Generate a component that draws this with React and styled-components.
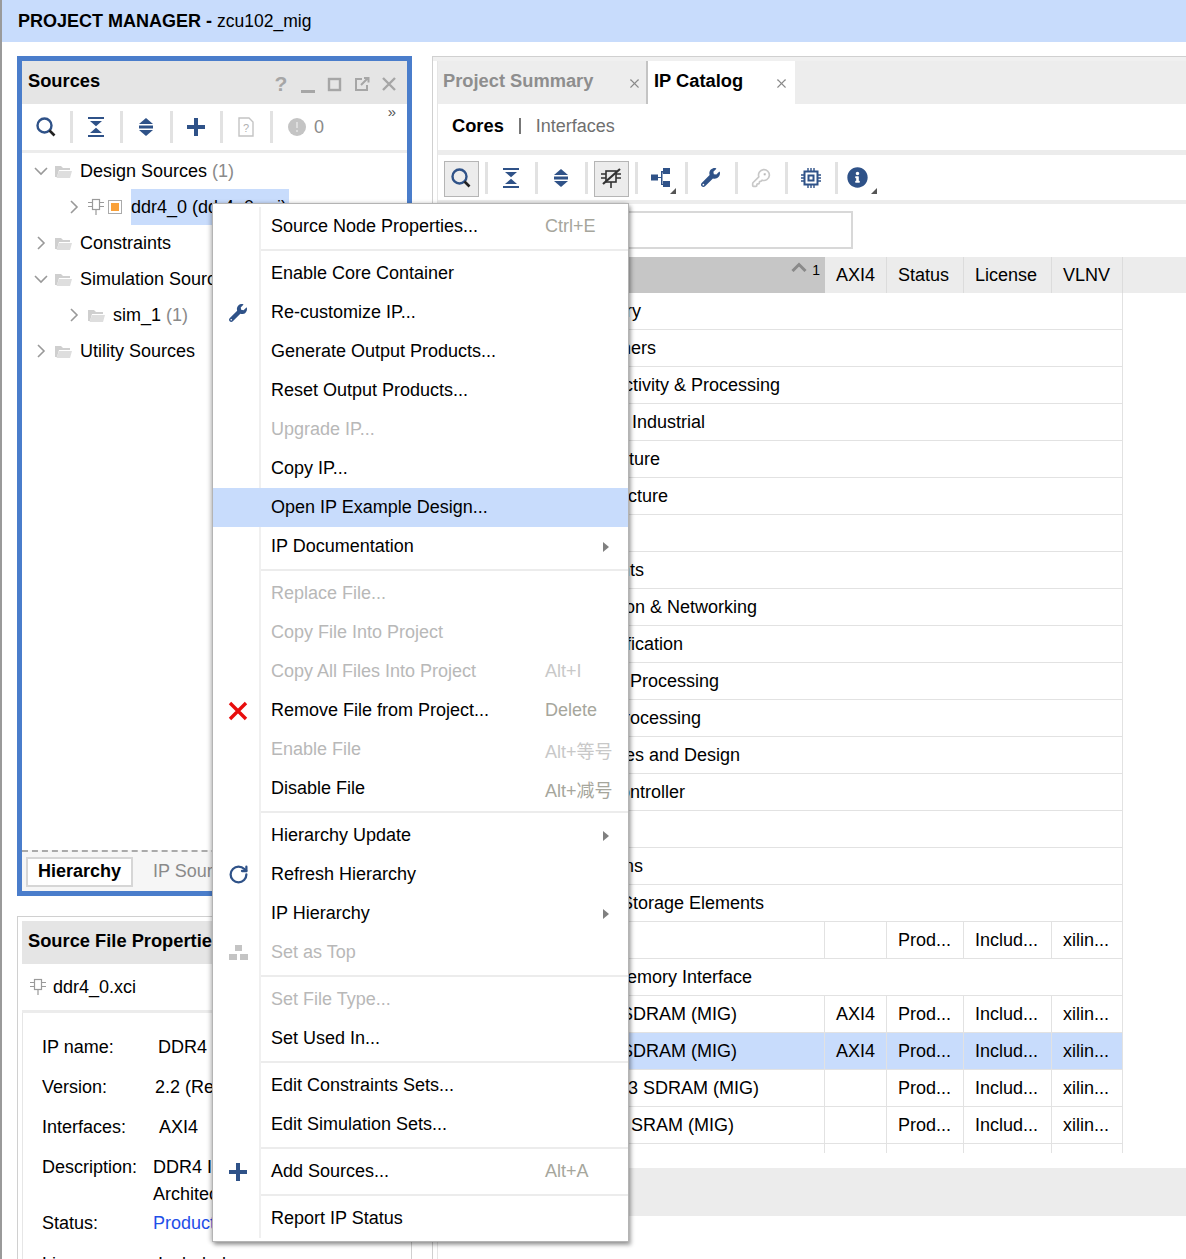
import React from 'react';
import styled, { createGlobalStyle } from 'styled-components';
import { FaWrench, FaInfoCircle } from 'react-icons/fa';
import { RotateCw, KeyRound, X as XIcon } from 'lucide-react';

const NAVY = '#2f5288';
const FONT = '"Liberation Sans", Arial, "Noto Sans CJK SC", sans-serif';

const GlobalStyle = createGlobalStyle`
    html, body {
        margin: 0;
        padding: 0;
        background: #fff;
    }
    body {
        width: 1186px;
        height: 1259px;
        overflow: hidden;
        font-family: ${FONT};
        font-size: 18px;
        color: #000;
    }
    * {
        box-sizing: border-box;
    }
`;

const Page = styled.div`
    position: relative;
    width: 1186px;
    height: 1259px;
    overflow: hidden;
    border-left: 2px solid #9a9a9a;
`;
const TopBar = styled.header`
    height: 42px;
    margin-left: -2px;
    padding-left: 18px;
    display: flex;
    align-items: center;
    background: #c8dcfc;
    font-size: 17.5px;
    b {
        margin-right: 5px;
        font-size: 18px;
    }
`;
const Columns = styled.div`
    display: flex;
    gap: 20px;
    padding: 14px 0 0 15px;
`;
const LeftCol = styled.div`
    width: 395px;
    flex: none;
    display: flex;
    flex-direction: column;
    gap: 20px;
`;

/* sources panel */
const SourcesPanel = styled.section`
    height: 840px;
    border: 5px solid #4a7dcb;
    display: flex;
    flex-direction: column;
`;
const TitleBar = styled.div`
    height: 43px;
    flex: none;
    padding: 0 3px 4px 6px;
    display: flex;
    align-items: center;
    justify-content: space-between;
    background: #e5e5e5;
    font-weight: bold;
    font-size: 18.3px;
`;
const TitleIcons = styled.div`
    display: flex;
    gap: 7px;
    padding: 8px 5px 0 0;
    svg {
        display: block;
        overflow: visible;
    }
`;
const Toolbar = styled.div`
    position: relative;
    height: ${(p) => p.$h}px;
    flex: none;
    padding-left: ${(p) => p.$pad}px;
    display: flex;
    align-items: center;
    background: #fff;
    border-bottom: ${(p) => p.$line}px solid #ececec;
`;
const Tool = styled.div`
    position: relative;
    width: 50px;
    height: 32px;
    flex: none;
    display: flex;
    align-items: center;
    justify-content: center;
    padding-right: 2px;
    border-right: 3px solid #e2e2e2;
    ${(p) => p.$plain && 'border-right: none;'}
    & > svg {
        display: block;
    }
    &::before {
        content: '';
        display: ${(p) => (p.$pressed ? 'block' : 'none')};
        position: absolute;
        left: 6px;
        top: -1px;
        width: 33px;
        height: 34px;
        background: #ececec;
        border: 1px solid #b5b5b5;
    }
    & > * {
        position: relative;
    }
`;
const Corner = styled.i`
    position: absolute !important;
    right: 9px;
    bottom: 0;
    width: 0;
    height: 0;
    border-left: 6px solid transparent;
    border-bottom: 6px solid #555;
`;
const Count = styled.span`
    color: #8a8a8a;
    margin-left: 8px;
`;
const More = styled.span`
    position: absolute;
    right: 11px;
    top: -1px;
    font-size: 15px;
    color: #555;
`;
const Tree = styled.div`
    flex: 1;
    overflow: hidden;
`;
const TreeRow = styled.div`
    height: 36px;
    padding-left: ${(p) => p.$indent}px;
    display: flex;
    align-items: center;
    white-space: nowrap;
    svg {
        flex: none;
    }
`;
const Twist = styled.svg`
    width: 14px;
    height: 14px;
    margin-right: 7px;
`;
const FolderSlot = styled.span`
    display: flex;
    margin-right: 8px;
`;
const Selected = styled.span`
    background: #c8dcfc;
    height: 36px;
    line-height: 36px;
    width: 158px;
    overflow: hidden;
    margin-left: 9px;
`;
const Muted = styled.span`
    color: #8a8a8a;
`;
const BottomTabs = styled.div`
    height: 41px;
    flex: none;
    padding-left: 4px;
    display: flex;
    align-items: center;
    gap: 18px;
    background: #f6f6f6;
    border-top: 2px dashed #aaa;
`;
const BottomTab = styled.div`
    height: 30px;
    padding: 0 10px;
    display: flex;
    align-items: center;
    white-space: nowrap;
    font-weight: ${(p) => (p.$active ? 'bold' : 'normal')};
    color: ${(p) => (p.$active ? '#000' : '#8a8a8a')};
    background: ${(p) => (p.$active ? '#fff' : 'transparent')};
    border: 2px solid ${(p) => (p.$active ? '#d6d6d6' : 'transparent')};
    ${(p) => !p.$active && 'padding-left: 0;'}
`;

/* properties panel */
const PropsPanel = styled.section`
    height: 360px;
    padding: 4px 0 0 4px;
    border: 1px solid #d0d0d0;
    border-bottom: none;
`;
const FileRow = styled.div`
    height: 49px;
    padding-left: 8px;
    display: flex;
    align-items: center;
    gap: 7px;
    border-bottom: 3px solid #ececec;
`;
const PropsBody = styled.div`
    padding: 21px 0 0 19px;
    border-left: 1px solid #e6e6e6;
    height: 260px;
`;
const PropRow = styled.div`
    display: flex;
    line-height: 27px;
    margin-bottom: ${(p) => p.$after}px;
    white-space: nowrap;
`;
const PropName = styled.div`
    width: 111px;
    flex: none;
`;
const PropValue = styled.div`
    margin-left: ${(p) => p.$shift || 0}px;
    color: ${(p) => (p.$link ? '#1f4fe8' : '#000')};
`;

/* ip catalog panel */
const CatalogPanel = styled.section`
    flex: 1;
    min-width: 0;
    height: 1203px;
    margin-right: -2px;
    padding: 4px 0 0 4px;
    background: linear-gradient(#f0f0f0 4px, #fff 4px);
    border-left: 1px solid #d0d0d0;
    border-top: 1px solid #d0d0d0;
`;
const Inner = styled.div`
    height: 100%;
    border-left: 1px solid #e6e6e6;
    margin-left: 0;
`;
const TabBar = styled.div`
    height: 43px;
    display: flex;
    background: #ededed;
`;
const Tab = styled.div`
    width: ${(p) => p.$w}px;
    padding: 0 ${(p) => p.$right}px 4px ${(p) => (p.$active ? 6 : 5)}px;
    display: flex;
    align-items: center;
    justify-content: space-between;
    font-weight: bold;
    font-size: 18.3px;
    color: ${(p) => (p.$active ? '#000' : '#8e8e8e')};
    background: ${(p) => (p.$active ? '#fff' : '#ededed')};
    border-left: ${(p) => (p.$active ? '2px solid #c4c4c4' : 'none')};
    svg {
        margin-top: 6px;
        color: #8a8a8a;
    }
`;
const SubTabs = styled.div`
    height: 51px;
    padding: 0 0 3px 14px;
    display: flex;
    align-items: center;
    border-bottom: 5px solid #ececec;
    b {
        font-size: 18.3px;
    }
`;
const SubDivider = styled.span`
    width: 2px;
    height: 16px;
    margin: 0 15px;
    background: #777;
`;
const SubLink = styled.span`
    padding-top: 2px;
    color: #6f6f6f;
`;
const SearchWrap = styled.div`
    height: 53px;
    padding: 7px 0 0 6px;
`;
const SearchBox = styled.div`
    width: 409px;
    height: 38px;
    border: 2px solid #d8d8d8;
    background: #fff;
`;
const Header = styled.div`
    height: 36px;
    display: flex;
    background: #ececec;
`;
const HeadCell = styled.div`
    width: ${(p) => p.$w}px;
    flex: none;
    padding-left: 11px;
    display: flex;
    align-items: center;
    border-right: 1px solid #dcdcdc;
`;
const SortCell = styled.div`
    width: 387px;
    flex: none;
    padding-right: 5px;
    display: flex;
    align-items: flex-start;
    justify-content: flex-end;
    gap: 3px;
    background: #c6c6c6;
    font-size: 14px;
    line-height: 26px;
    svg {
        margin: 5px 2px 0 0;
    }
`;
const Body = styled.div`
    width: 685px;
    height: 860px;
    overflow: hidden;
    border-right: 1px solid #e2e2e2;
`;
const Row = styled.div`
    height: 37px;
    display: flex;
    background: ${(p) => (p.$selected ? '#c8dcfc' : '#fff')};
    border-bottom: 1px solid #e2e2e2;
`;
const NameCell = styled.div`
    flex: ${(p) => (p.$wide ? '1' : 'none')};
    width: ${(p) => (p.$wide ? 'auto' : '387px')};
    padding-left: ${(p) => p.$indent}px;
    display: flex;
    align-items: center;
    white-space: nowrap;
    border-right: ${(p) => (p.$wide ? 'none' : '1px solid #e2e2e2')};
`;
const Cell = styled.div`
    width: ${(p) => p.$w}px;
    flex: none;
    padding-left: 11px;
    display: flex;
    align-items: center;
    white-space: nowrap;
    border-right: 1px solid #e2e2e2;
    &:last-child {
        border-right: none;
    }
`;
const FooterBand = styled.div`
    height: 48px;
    margin-top: 15px;
    background: #ececec;
`;

/* context menu */
const Menu = styled.div`
    position: absolute;
    left: 210px;
    top: 203px;
    width: 417px;
    height: 1039px;
    padding-top: 3px;
    background: #fff;
    border: 1px solid #b4b4b4;
    box-shadow: 2px 3px 4px rgba(0, 0, 0, 0.35), -2px 0 4px rgba(0, 0, 0, 0.2);
`;
const Item = styled.div`
    height: 39px;
    display: flex;
    align-items: center;
    white-space: nowrap;
    background: ${(p) => (p.$active ? '#c8dcfc' : 'transparent')};
    color: ${(p) => (p.$disabled ? '#b8b8b8' : '#000')};
`;
const ItemIcon = styled.div`
    width: 48px;
    height: 100%;
    flex: none;
    padding-left: 4px;
    display: flex;
    align-items: center;
    justify-content: center;
    border-right: 2px solid ${(p) => (p.$active ? 'transparent' : '#f0f0f0')};
`;
const ItemLabel = styled.div`
    width: 284px;
    flex: none;
    padding-left: 10px;
`;
const Shortcut = styled.div`
    color: ${(p) => (p.$disabled ? '#c8c8c8' : '#a6a69c')};
`;
const Arrow = styled.i`
    margin-left: 58px;
    width: 0;
    height: 0;
    border-left: 6px solid #808080;
    border-top: 5px solid transparent;
    border-bottom: 5px solid transparent;
`;
const Separator = styled.div`
    height: 8px;
    margin-left: 46px;
    padding-top: 3px;
    border-left: 2px solid #f0f0f0;
    &::after {
        content: '';
        display: block;
        height: 2px;
        background: #ececec;
    }
`;

/* icons */
const SearchIcon = () => (
    <svg width="22" height="22" viewBox="0 0 22 22" fill="none">
        <circle cx="9.5" cy="9.5" r="7" stroke={NAVY} strokeWidth="2.4" />
        <path d="M14.5 14.5l5 5" stroke="#222" strokeWidth="2.6" />
    </svg>
);
const CollapseIcon = () => (
    <svg width="16" height="22" viewBox="0 0 16 22" fill={NAVY}>
        <rect x="0" y="1" width="16" height="2" />
        <path d="M2 5h12L8 10.200z" />
        <path d="M2 17h12L8 11.800z" />
        <rect x="0" y="19" width="16" height="2" />
    </svg>
);
const ExpandIcon = () => (
    <svg width="16" height="20" viewBox="0 0 16 20" fill={NAVY}>
        <path d="M8 1l7 6H1z" />
        <rect x="1" y="8.5" width="14" height="3" />
        <path d="M8 19l7-6H1z" />
    </svg>
);
const PlusIcon = ({ size = 20 }) => (
    <svg width={size} height={size} viewBox="0 0 20 20" fill={NAVY}>
        <path d="M8 1h4v7h7v4h-7v7H8v-7H1V8h7z" />
    </svg>
);
const DocIcon = () => (
    <svg width="16" height="20" viewBox="0 0 16 20" fill="none" stroke="#c4c4c4" strokeWidth="1.4">
        <path d="M1 1h10l4 4v14H1z" />
        <text x="8" y="15" fontSize="11" fontFamily={FONT} fill="#b0b0b0" stroke="none" textAnchor="middle">?</text>
    </svg>
);
const AlertIcon = () => (
    <svg width="18" height="18" viewBox="0 0 18 18">
        <circle cx="9" cy="9" r="9" fill="#c4c4c4" />
        <path d="M8 4h2v6H8zM8 12h2v2H8z" fill="#ddd" />
    </svg>
);
const FolderIcon = () => (
    <svg width="17" height="15" viewBox="0 0 17 15">
        <path d="M0 2h6l2 2h7v2H4L2 13H0z" fill="#cfcfcf" />
        <path d="M4 7h13l-2 7H1.500z" fill="#dedede" />
    </svg>
);
const IpIcon = () => (
    <svg width="16" height="18" viewBox="0 0 16 18" fill="none" stroke="#9a9a9a" strokeWidth="1.2">
        <rect x="4.500" y="1.500" width="7" height="10" />
        <path d="M0 4.500h4.500M0 8.500h4.500M11.500 4.500H16M11.500 8.500H16M8 11.500V17" />
    </svg>
);
const OrangeBox = () => (
    <svg width="14" height="14" viewBox="0 0 14 14" style={{ marginLeft: 4 }}>
        <rect x="0.500" y="0.500" width="13" height="13" fill="#fff" stroke="#aaa" />
        <rect x="3" y="3" width="8" height="8" fill="#f9a13a" />
    </svg>
);
const Chevron = ({ open }) => (
    <Twist viewBox="0 0 14 14" fill="none" stroke="#999" strokeWidth="1.6">
        <path d={open ? 'M1 4l6 6 6-6' : 'M4 1l6 6-6 6'} />
    </Twist>
);
const SchematicIcon = () => (
    <svg width="22" height="22" viewBox="0 0 22 22" fill="none" stroke="#333" strokeWidth="1.6">
        <rect x="6" y="4" width="10" height="11" />
        <path d="M1 7h5M1 11h5M16 7h5M16 11h5M11 15v6" />
        <path d="M3 17L20 2" strokeWidth="2.200" />
    </svg>
);
const HierIcon = () => (
    <svg width="20" height="19" viewBox="0 0 20 19" fill={NAVY}>
        <rect x="0" y="6.500" width="7" height="6" />
        <rect x="12" y="0" width="7" height="6" />
        <rect x="12" y="13" width="7" height="6" />
        <path d="M7 9h3V3h2v1.500h-.5V9.500h0V16h.5v1h-2v-7H7z" />
    </svg>
);
const ChipIcon = () => (
    <svg width="20" height="20" viewBox="0 0 20 20" fill="none" stroke={NAVY}>
        <rect x="3.500" y="3.500" width="13" height="13" strokeWidth="2" />
        <rect x="7.500" y="7.500" width="5" height="5" strokeWidth="2" />
        <path d="M7 0v3M10 0v3M13 0v3M7 17v3M10 17v3M13 17v3M0 7h3M0 10h3M0 13h3M17 7h3M17 10h3M17 13h3" strokeWidth="1.400" />
    </svg>
);
const RedX = () => (
    <svg width="20" height="20" viewBox="0 0 20 20" stroke="#e80d0d" strokeWidth="3.400">
        <path d="M2 2l16 16M18 2L2 18" />
    </svg>
);
const TopIcon = () => (
    <svg width="19" height="16" viewBox="0 0 19 16" fill="#c4c4c4">
        <rect x="6" y="0" width="7" height="6" />
        <rect x="0" y="9" width="8" height="6" />
        <rect x="11" y="9" width="8" height="6" />
    </svg>
);
const TitleGlyphs = () => (
    <TitleIcons>
        <svg width="20" height="20" viewBox="0 0 20 20">
            <text x="10" y="16" fontSize="21" fontWeight="bold" fontFamily={FONT} fill="#a6a6a6" textAnchor="middle">?</text>
        </svg>
        <svg width="20" height="20" viewBox="0 0 20 20" fill="#a6a6a6">
            <rect x="3" y="15" width="14" height="3" />
        </svg>
        <svg width="20" height="20" viewBox="0 0 20 20" fill="none" stroke="#a6a6a6" strokeWidth="2.400">
            <rect x="4" y="4" width="11" height="11" />
        </svg>
        <svg width="20" height="20" viewBox="0 0 20 20" fill="none" stroke="#a6a6a6" strokeWidth="2">
            <path d="M10 4H4v11h11V10M9 10l7-7M12 3h4.500v4.500" />
        </svg>
        <svg width="20" height="20" viewBox="0 0 20 20" fill="none" stroke="#a6a6a6" strokeWidth="2.400">
            <path d="M4 3l12 12M16 3L4 15" />
        </svg>
    </TitleIcons>
);

const CELLS = ['Prod...', 'Includ...', 'xilin...'];
const rows = [
    { name: 'AI Core Library', indent: 82 },
    { name: 'Alliance Partners', indent: 82 },
    { name: 'Audio Connectivity & Processing', indent: 82 },
    { name: 'Automotive & Industrial', indent: 82 },
    { name: 'AXI Infrastructure', indent: 82 },
    { name: 'Board Architecture', indent: 82 },
    { name: 'Base IP', indent: 82 },
    { name: 'Basic Elements', indent: 82 },
    { name: 'Communication & Networking', indent: 82 },
    { name: 'Debug & Verification', indent: 82 },
    { name: 'Digital Signal Processing', indent: 82 },
    { name: 'Embedded Processing', indent: 82 },
    { name: 'FPGA Features and Design', indent: 82 },
    { name: 'Peripheral Controller', indent: 82 },
    { name: 'Kernels', indent: 82 },
    { name: 'Math Functions', indent: 82 },
    { name: 'Memories & Storage Elements', indent: 82 },
    { name: 'FIFO', indent: 129, data: true },
    { name: 'External Memory Interface', indent: 103 },
    { name: 'DDR3 SDRAM (MIG)', indent: 129, data: true, axi: 'AXI4' },
    { name: 'DDR4 SDRAM (MIG)', indent: 129, data: true, axi: 'AXI4', selected: true },
    { name: 'LPDDR3 SDRAM (MIG)', indent: 129, data: true },
    { name: 'QDR-IV SRAM (MIG)', indent: 125, data: true },
    { name: '', indent: 129, data: true, blank: true },
];

const menu = [
    { label: 'Source Node Properties...', key: 'Ctrl+E' },
    'sep',
    { label: 'Enable Core Container' },
    { label: 'Re-customize IP...', icon: <FaWrench size={18} color={NAVY} /> },
    { label: 'Generate Output Products...' },
    { label: 'Reset Output Products...' },
    { label: 'Upgrade IP...', off: true },
    { label: 'Copy IP...' },
    { label: 'Open IP Example Design...', active: true },
    { label: 'IP Documentation', sub: true },
    'sep',
    { label: 'Replace File...', off: true },
    { label: 'Copy File Into Project', off: true },
    { label: 'Copy All Files Into Project', off: true, key: 'Alt+I' },
    { label: 'Remove File from Project...', icon: <RedX />, key: 'Delete' },
    { label: 'Enable File', off: true, key: 'Alt+等号' },
    { label: 'Disable File', key: 'Alt+减号' },
    'sep',
    { label: 'Hierarchy Update', sub: true },
    { label: 'Refresh Hierarchy', icon: <RotateCw size={21} color={NAVY} strokeWidth={2.6} /> },
    { label: 'IP Hierarchy', sub: true },
    { label: 'Set as Top', off: true, icon: <TopIcon /> },
    'sep',
    { label: 'Set File Type...', off: true },
    { label: 'Set Used In...' },
    'sep',
    { label: 'Edit Constraints Sets...' },
    { label: 'Edit Simulation Sets...' },
    'sep',
    { label: 'Add Sources...', icon: <PlusIcon />, key: 'Alt+A' },
    'sep',
    { label: 'Report IP Status' },
];

const App = () => {
    return (
        <Page>
            <GlobalStyle />
            <TopBar>
                <b>PROJECT MANAGER -</b> zcu102_mig
            </TopBar>
            <Columns>
                <LeftCol>
                    <SourcesPanel>
                        <TitleBar>
                            Sources
                            <TitleGlyphs />
                        </TitleBar>
                        <Toolbar $h={49} $pad={1} $line={3}>
                            <Tool><SearchIcon /></Tool>
                            <Tool><CollapseIcon /></Tool>
                            <Tool><ExpandIcon /></Tool>
                            <Tool><PlusIcon /></Tool>
                            <Tool><DocIcon /></Tool>
                            <Tool $plain style={{ width: 'auto', paddingLeft: 15 }}>
                                <AlertIcon />
                                <Count>0</Count>
                            </Tool>
                            <More>»</More>
                        </Toolbar>
                        <Tree>
                            <TreeRow $indent={12}>
                                <Chevron open />
                                <FolderSlot><FolderIcon /></FolderSlot>
                                Design Sources&nbsp;<Muted>(1)</Muted>
                            </TreeRow>
                            <TreeRow $indent={45}>
                                <Chevron />
                                <IpIcon />
                                <OrangeBox />
                                <Selected>ddr4_0 (ddr4_0.xci)</Selected>
                            </TreeRow>
                            <TreeRow $indent={12}>
                                <Chevron />
                                <FolderSlot><FolderIcon /></FolderSlot>
                                Constraints
                            </TreeRow>
                            <TreeRow $indent={12}>
                                <Chevron open />
                                <FolderSlot><FolderIcon /></FolderSlot>
                                Simulation Sources&nbsp;<Muted>(1)</Muted>
                            </TreeRow>
                            <TreeRow $indent={45}>
                                <Chevron />
                                <FolderSlot><FolderIcon /></FolderSlot>
                                sim_1&nbsp;<Muted>(1)</Muted>
                            </TreeRow>
                            <TreeRow $indent={12}>
                                <Chevron />
                                <FolderSlot><FolderIcon /></FolderSlot>
                                Utility Sources
                            </TreeRow>
                        </Tree>
                        <BottomTabs>
                            <BottomTab $active>Hierarchy</BottomTab>
                            <BottomTab>IP Sources</BottomTab>
                        </BottomTabs>
                    </SourcesPanel>
                    <PropsPanel>
                        <TitleBar>Source File Properties</TitleBar>
                        <FileRow>
                            <IpIcon />
                            ddr4_0.xci
                        </FileRow>
                        <PropsBody>
                            <PropRow $after={13}>
                                <PropName>IP name:</PropName>
                                <PropValue $shift={5}>DDR4 SDRAM (MIG)</PropValue>
                            </PropRow>
                            <PropRow $after={13}>
                                <PropName>Version:</PropName>
                                <PropValue $shift={2}>2.2 (Rev. 6)</PropValue>
                            </PropRow>
                            <PropRow $after={13}>
                                <PropName>Interfaces:</PropName>
                                <PropValue $shift={6}>AXI4</PropValue>
                            </PropRow>
                            <PropRow $after={2}>
                                <PropName>Description:</PropName>
                                <PropValue>
                                    DDR4 Interface for UltraScale
                                    <br />
                                    Architecture
                                </PropValue>
                            </PropRow>
                            <PropRow $after={14}>
                                <PropName>Status:</PropName>
                                <PropValue $link>Production</PropValue>
                            </PropRow>
                            <PropRow $after={0}>
                                <PropName>License:</PropName>
                                <PropValue $shift={5}>Included</PropValue>
                            </PropRow>
                        </PropsBody>
                    </PropsPanel>
                </LeftCol>
                <CatalogPanel>
                    <Inner>
                        <TabBar>
                            <Tab $w={208} $right={4}>
                                <span>Project Summary</span>
                                <XIcon size={15} strokeWidth={1.8} />
                            </Tab>
                            <Tab $w={149} $right={6} $active>
                                <span>IP Catalog</span>
                                <XIcon size={15} strokeWidth={1.8} />
                            </Tab>
                        </TabBar>
                        <SubTabs>
                            <b>Cores</b>
                            <SubDivider />
                            <SubLink>Interfaces</SubLink>
                        </SubTabs>
                        <Toolbar $h={49} $pad={0} $line={4}>
                            <Tool $pressed><SearchIcon /></Tool>
                            <Tool><CollapseIcon /></Tool>
                            <Tool><ExpandIcon /></Tool>
                            <Tool $pressed><SchematicIcon /></Tool>
                            <Tool><HierIcon /><Corner /></Tool>
                            <Tool><FaWrench size={19} color={NAVY} /></Tool>
                            <Tool><KeyRound size={20} color="#c8c8c8" /></Tool>
                            <Tool><ChipIcon /></Tool>
                            <Tool $plain style={{ width: 42, paddingRight: 4 }}><FaInfoCircle size={21} color={NAVY} /><Corner style={{ right: 3 }} /></Tool>
                        </Toolbar>
                        <SearchWrap>
                            <SearchBox />
                        </SearchWrap>
                        <Header>
                            <SortCell>
                                <svg width="16" height="10" viewBox="0 0 16 10" fill="none" stroke="#8a8a8a" strokeWidth="3">
                                    <path d="M1.500 9L8 2.500 14.500 9" />
                                </svg>
                                1
                            </SortCell>
                            <HeadCell $w={62}>AXI4</HeadCell>
                            <HeadCell $w={77}>Status</HeadCell>
                            <HeadCell $w={88}>License</HeadCell>
                            <HeadCell $w={71}>VLNV</HeadCell>
                        </Header>
                        <Body>
                            {rows.map((r) => (
                                <Row key={r.name} $selected={r.selected}>
                                    <NameCell $wide={!r.data} $indent={r.indent}>{r.name}</NameCell>
                                    {r.data && (
                                        <>
                                            <Cell $w={62}>{r.axi}</Cell>
                                            <Cell $w={77}>{!r.blank && CELLS[0]}</Cell>
                                            <Cell $w={88}>{!r.blank && CELLS[1]}</Cell>
                                            <Cell $w={70}>{!r.blank && CELLS[2]}</Cell>
                                        </>
                                    )}
                                </Row>
                            ))}
                        </Body>
                        <FooterBand />
                    </Inner>
                </CatalogPanel>
            </Columns>
            <Menu>
                {menu.map((m, i) =>
                    m === 'sep' ? (
                        <Separator key={i} />
                    ) : (
                        <Item key={m.label} $active={m.active} $disabled={m.off}>
                            <ItemIcon $active={m.active}>{m.icon}</ItemIcon>
                            <ItemLabel>{m.label}</ItemLabel>
                            {m.key && <Shortcut $disabled={m.off}>{m.key}</Shortcut>}
                            {m.sub && <Arrow />}
                        </Item>
                    )
                )}
            </Menu>
        </Page>
    );
};

export default App;
